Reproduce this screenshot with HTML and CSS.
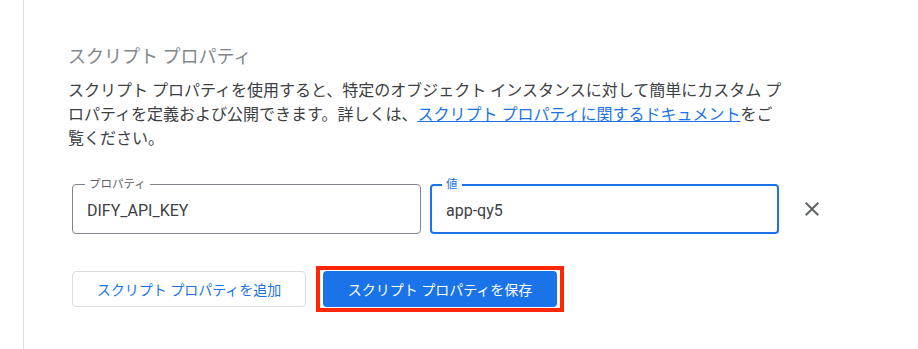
FILE: index.html
```html
<!DOCTYPE html>
<html lang="ja">
<head>
<meta charset="utf-8">
<link rel="stylesheet" href="styles.css">
</head>
<body>
<div class="panel">
  <section class="props">
    <h2 class="title">スクリプト プロパティ</h2>
    <p class="desc">スクリプト プロパティを使用すると、特定のオブジェクト インスタンスに対して簡単にカスタム プロパティを定義および公開できます。詳しくは、<a href="#" class="link">スクリプト プロパティに関するドキュメント</a>をご覧ください。</p>
    <div class="fields">
      <div class="field">
        <span class="field-label">プロパティ</span>
        <span class="field-value">DIFY_API_KEY</span>
      </div>
      <div class="field focused">
        <span class="field-label">値</span>
        <span class="field-value">app-qy5</span>
      </div>
      <svg class="close" width="24" height="24" viewBox="0 0 24 24" aria-label="削除"><path d="M19 6.41L17.59 5 12 10.59 6.41 5 5 6.41 10.59 12 5 17.59 6.41 19 12 13.41 17.59 19 19 17.59 13.41 12z" fill="#5f6368"/></svg>
    </div>
    <div class="actions">
      <button class="btn btn-outline">スクリプト プロパティを追加</button>
      <span class="highlight"><button class="btn btn-primary">スクリプト プロパティを保存</button></span>
    </div>
  </section>
</div>
</body>
</html>
```

FILE: styles.css
```css
html, body {
  margin: 0;
  height: 100%;
  background: #ffffff;
}
body {
  font-family: Roboto, "Noto Sans CJK JP", sans-serif;
  color: #3c4043;
}
.panel {
  margin-left: 23px;
  height: 100%;
  border-left: 1px solid #e0e0e0;
  box-sizing: border-box;
}
.props {
  padding: 45px 0 0 44px;
}
.title {
  margin: 0;
  font-size: 18px;
  line-height: 24px;
  font-weight: 400;
  color: #80868b;
}
.desc {
  margin: 10px 0 0 0;
  width: 718px;
  font-size: 16px;
  line-height: 24px;
  color: #3c4043;
}
.link {
  color: #1a73e8;
  text-decoration: underline;
}
.fields {
  display: flex;
  align-items: center;
  gap: 9px;
  margin: 33px 0 0 4px;
}
.field {
  position: relative;
  box-sizing: border-box;
  width: 349px;
  height: 50px;
  border: 1px solid #80868b;
  border-radius: 4px;
  padding: 0 14px;
  display: flex;
  align-items: center;
}
.field.focused {
  border: 2px solid #1a73e8;
  padding: 0 14px;
}
.field-label {
  position: absolute;
  left: 12px;
  top: -7px;
  padding: 0 4px;
  background: #ffffff;
  font-size: 11.5px;
  line-height: 12px;
  color: #5f6368;
}
.field.focused .field-label {
  left: 10px;
  top: -8px;
  color: #1a73e8;
}
.field-value {
  font-size: 16px;
  color: #3c4043;
  padding-top: 2px;
}
.close {
  margin-left: 12px;
  flex: none;
}
.actions {
  display: flex;
  align-items: center;
  gap: 10px;
  margin: 32px 0 0 4px;
}
.btn {
  box-sizing: border-box;
  width: 234px;
  height: 36px;
  border-radius: 4px;
  font-family: Roboto, "Noto Sans CJK JP", sans-serif;
  font-size: 14px;
  padding: 0 12px;
  cursor: pointer;
}
.btn-outline {
  background: #ffffff;
  border: 1px solid #dadce0;
  color: #1a73e8;
}
.btn-primary {
  background: #1a73e8;
  border: none;
  color: #ffffff;
}
.highlight {
  display: inline-flex;
  border: 4px solid #ff2600;
  padding: 1px 3px;
}
```
